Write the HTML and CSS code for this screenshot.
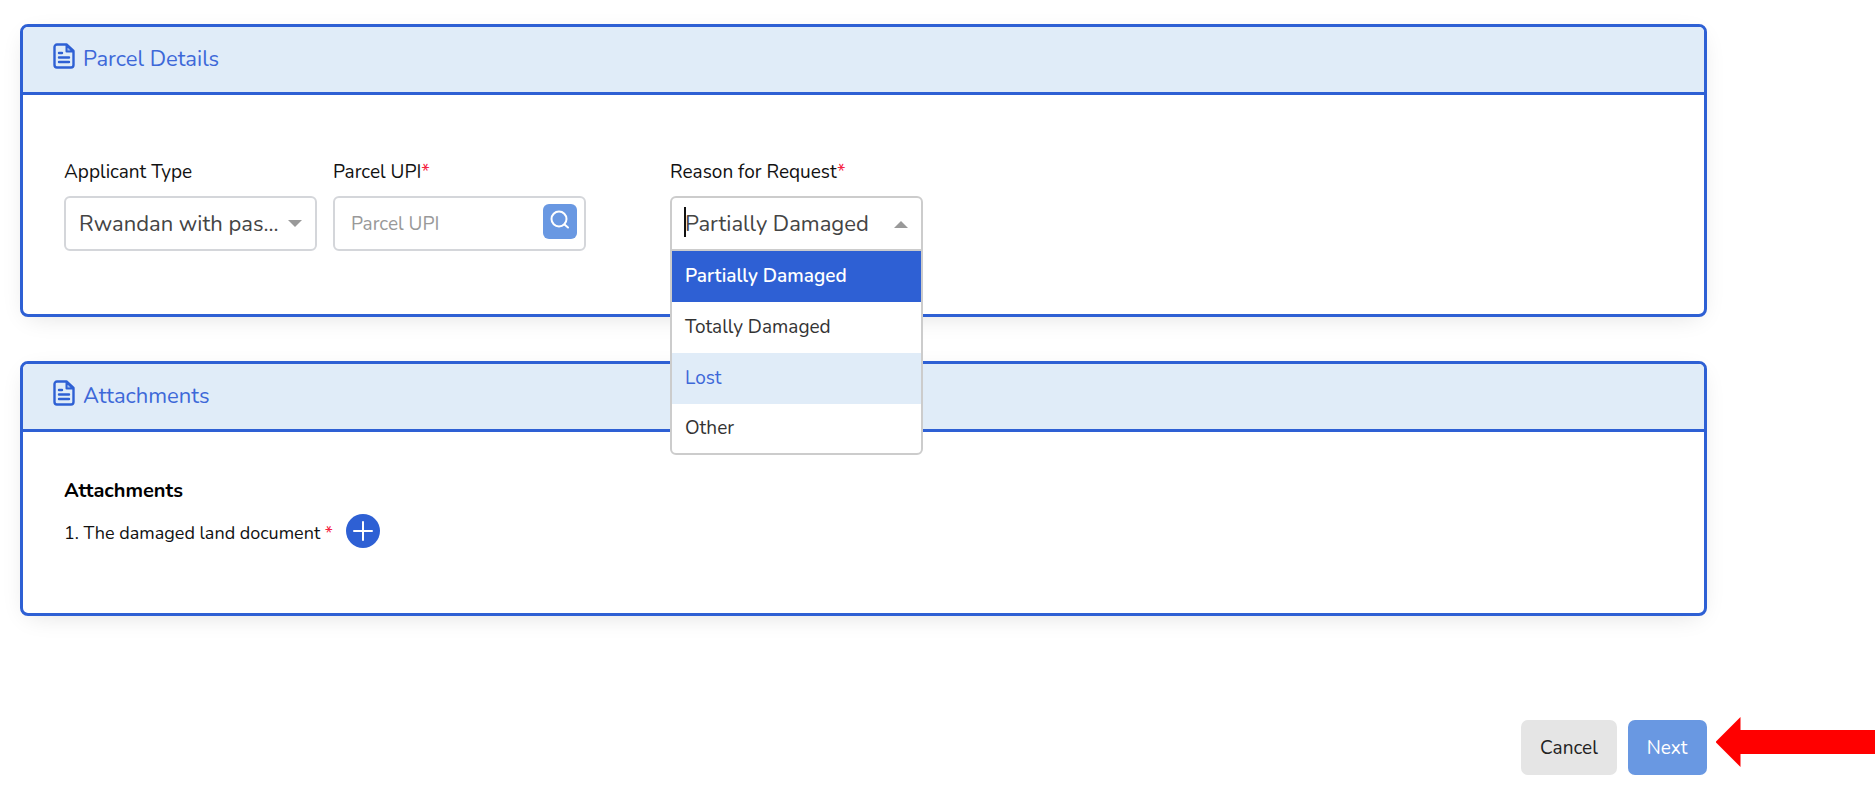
FILE: index.html
```html
<!DOCTYPE html>
<html lang="en">
<head>
    <meta charset="UTF-8">
    <meta name="viewport" content="width=device-width, initial-scale=1.0">
    <title>Parcel Details</title>
    <link rel="stylesheet" href="styles.css">
</head>
<body>
    <form class="page">
        <section class="card">
            <h2 class="card-header">
                <svg class="icon" viewBox="0 0 22 26" aria-hidden="true">
                    <path d="M13.5 1.5H4A2.5 2.5 0 0 0 1.5 4v18A2.5 2.5 0 0 0 4 24.5h14a2.5 2.5 0 0 0 2.5-2.5V8z"/>
                    <path class="fold" d="M13.5 2v6.5H20z"/>
                    <path d="M6 10h3M6 14.5h10M6 19h10"/>
                </svg>
                <span>Parcel Details</span>
            </h2>
            <div class="card-body fields">
                <div class="field">
                    <label for="applicantType">Applicant Type</label>
                    <div class="control">
                        <select id="applicantType">
                            <option>Rwandan with pas...</option>
                        </select>
                        <span class="arrow-down"></span>
                    </div>
                </div>
                <div class="field">
                    <label for="parcelUpi">Parcel UPI<span class="required">*</span></label>
                    <div class="control">
                        <input type="text" id="parcelUpi" class="upi" placeholder="Parcel UPI">
                        <button type="button" class="search-btn" aria-label="Search">
                            <svg viewBox="0 0 20 20" aria-hidden="true">
                                <circle cx="9" cy="9" r="7.5"/>
                                <path d="M14.5 14.5l3.5 3"/>
                            </svg>
                        </button>
                    </div>
                </div>
                <div class="field reason">
                    <label for="reason">Reason for Request<span class="required">*</span></label>
                    <div class="control open">
                        <input type="text" id="reason" role="combobox" aria-expanded="true" aria-controls="reasonList" value="Partially Damaged">
                        <span class="caret"></span>
                        <span class="arrow-up"></span>
                        <ul class="options" id="reasonList" role="listbox">
                            <li class="selected" role="option" aria-selected="true">Partially Damaged</li>
                            <li role="option">Totally Damaged</li>
                            <li class="marked" role="option">Lost</li>
                            <li role="option">Other</li>
                        </ul>
                    </div>
                </div>
            </div>
        </section>

        <section class="card">
            <h2 class="card-header">
                <svg class="icon" viewBox="0 0 22 26" aria-hidden="true">
                    <path d="M13.5 1.5H4A2.5 2.5 0 0 0 1.5 4v18A2.5 2.5 0 0 0 4 24.5h14a2.5 2.5 0 0 0 2.5-2.5V8z"/>
                    <path class="fold" d="M13.5 2v6.5H20z"/>
                    <path d="M6 10h3M6 14.5h10M6 19h10"/>
                </svg>
                <span>Attachments</span>
            </h2>
            <div class="card-body attachments">
                <h3>Attachments</h3>
                <div class="attachment">
                    <span class="document">1. The damaged land document <span class="required">*</span></span>
                    <button type="button" class="add-btn" aria-label="Add document">
                        <svg viewBox="0 0 20 20" aria-hidden="true"><path d="M10 1v18M1 10h18"/></svg>
                    </button>
                </div>
            </div>
        </section>
    </form>

    <div class="footer">
        <div class="actions">
            <button type="button" class="btn cancel">Cancel</button>
            <button type="button" class="btn next">Next</button>
        </div>
        <div class="pointer">
            <span class="pointer-head"></span>
            <span class="pointer-line"></span>
        </div>
    </div>
</body>
</html>
```
FILE: styles.css
```css
* {
    box-sizing: border-box;
}
body {
    margin: 0;
    padding: 24px 0 16px 20px;
    font-family: Nunito, Lato, sans-serif;
    font-size: 19px;
    line-height: 24px;
    color: #111;
    background: #fff;
    overflow-x: hidden;
}
input, select, button {
    font: inherit;
    color: inherit;
}
.page,
.actions {
    width: calc(90vw - 1px);
}
.card {
    margin-bottom: 44px;
    border: 3px solid #2e60d4;
    border-radius: 8px;
    background: #fff;
    box-shadow: 0 6px 24px -8px rgba(0, 0, 0, 0.14);
}
.card-header {
    display: flex;
    align-items: flex-start;
    gap: 8px;
    height: 68px;
    margin: 0;
    padding: 16px 30px 0;
    border-bottom: 3px solid #2e60d4;
    border-radius: 5px 5px 0 0;
    background: #e0ecf8;
    color: #3d68d8;
    font-size: 22px;
    line-height: 32px;
    font-weight: 400;
}
.icon {
    width: 22px;
    height: 26px;
    fill: none;
    stroke: #2e60d4;
    stroke-width: 2.4;
    stroke-linecap: round;
    stroke-linejoin: round;
}
.icon .fold {
    stroke-width: 2;
    fill: #9fbcec;
}
.card-body {
    padding: 65px 41px 63px;
}
.fields {
    display: flex;
    gap: 16px;
}
.field {
    width: 253px;
}
.reason {
    margin-left: 68px;
}
.field label {
    display: block;
    margin-bottom: 12px;
}
.required {
    color: #f5223f;
}
.control {
    position: relative;
    display: flex;
    align-items: center;
}
.control select,
.control input {
    width: 100%;
    height: 55px;
    padding: 0 13px;
    border: 2px solid #d4d6da;
    border-radius: 6px;
    outline: none;
    background: #fff;
    color: #444;
    font-size: 22px;
    appearance: none;
}
.control .upi {
    padding: 0 60px 0 16px;
    font-size: 19px;
}
.upi::placeholder {
    color: #999;
}
.arrow-down,
.arrow-up {
    position: absolute;
    right: 15px;
    border: 7px solid transparent;
    pointer-events: none;
}
.arrow-down {
    top: 24px;
    border-top-color: #999;
    border-bottom: 0;
}
.arrow-up {
    top: 25px;
    border-bottom-color: #999;
    border-top: 0;
}
.search-btn {
    position: absolute;
    right: 9px;
    top: 8px;
    display: flex;
    align-items: center;
    justify-content: center;
    width: 34px;
    height: 35px;
    padding: 0 0 3px;
    border: none;
    border-radius: 6px;
    background: #6998e2;
    cursor: pointer;
}
.search-btn svg,
.add-btn svg {
    width: 20px;
    height: 20px;
    fill: none;
    stroke: #fff;
    stroke-width: 2;
    stroke-linecap: round;
}
.control.open input {
    border-color: #ccc;
    border-radius: 6px 6px 0 0;
}
.caret {
    position: absolute;
    left: 14px;
    top: 11px;
    width: 2px;
    height: 30px;
    background: #111;
}
.options {
    position: absolute;
    top: 54px;
    left: 0;
    z-index: 10;
    width: 100%;
    margin: 0;
    padding: 0;
    border: 2px solid #ccc;
    border-top-width: 1px;
    border-radius: 0 0 6px 6px;
    background: #fff;
    color: #333;
    list-style: none;
}
.options li {
    height: 51px;
    padding: 0 13px;
    line-height: 51px;
}
.options li:last-child {
    height: 49px;
    line-height: 49px;
    border-radius: 0 0 4px 4px;
}
.options .selected {
    background: #2e60d4;
    color: #fff;
    font-weight: 600;
}
.options .marked {
    background: #e0ecf8;
    color: #3d68d8;
}
.card-body.attachments {
    padding: 47px 41px 65px;
}
.attachments h3 {
    margin: 0 0 11px;
    font-size: 20px;
    line-height: 24px;
    font-weight: 700;
    color: #000;
}
.attachment {
    display: flex;
    align-items: flex-start;
    gap: 13px;
}
.document {
    padding-top: 7px;
    font-size: 18px;
}
.add-btn {
    display: flex;
    align-items: center;
    justify-content: center;
    width: 34px;
    height: 34px;
    padding: 0;
    border: none;
    border-radius: 50%;
    background: #2e60d4;
    cursor: pointer;
}
.footer {
    display: flex;
    align-items: center;
    margin-top: 101px;
}
.actions {
    display: flex;
    justify-content: flex-end;
    gap: 11px;
}
.btn {
    height: 55px;
    padding: 0 19px;
    border: none;
    border-radius: 7px;
    cursor: pointer;
}
.cancel {
    background: #e5e5e5;
    color: #222;
}
.next {
    background: #6998e2;
    color: #fff;
}
.pointer {
    display: flex;
    flex: 1;
    align-items: center;
    margin: 0 0 11px 9px;
}
.pointer-head {
    width: 25px;
    height: 50px;
    background: #f00;
    clip-path: polygon(0 50%, 100% 0, 100% 100%);
}
.pointer-line {
    flex: 1;
    height: 24px;
    margin-left: -1px;
    background: #f00;
}
```
